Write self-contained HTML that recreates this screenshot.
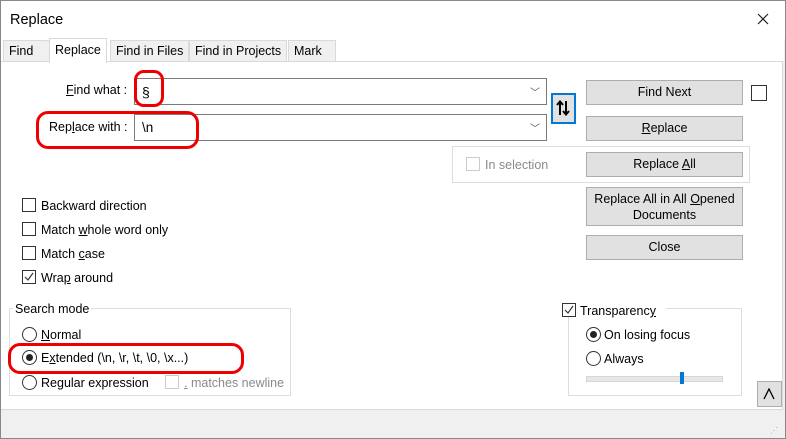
<!DOCTYPE html>
<html><head><style>
body{margin:0;width:786px;height:439px;overflow:hidden;font-family:"Liberation Sans",sans-serif;font-size:12.5px;color:#000;background:#fff;position:relative}
.a{position:absolute;white-space:nowrap}
.win{left:0;top:0;width:784px;height:437px;border:1px solid #888;background:#f0f0f0}
.cb{position:absolute;width:12px;height:12px;border:1px solid #333;background:#fff}
.rb{position:absolute;width:13px;height:13px;border:1px solid #333;border-radius:50%;background:#fff}
.rb.on::after{content:"";position:absolute;left:3px;top:3px;width:7px;height:7px;border-radius:50%;background:#222}
.btn{position:absolute;left:586px;width:155px;background:#e1e1e1;border:1px solid #adadad;text-align:center;line-height:23px}
.tab{position:absolute;top:40px;height:20px;line-height:21px;background:#f0f0f0;border:1px solid #d9d9d9;border-bottom:none;padding:0 5px;font-size:12.5px}
.red{position:absolute;border:3px solid #e00;border-radius:10px}
.inp{position:absolute;left:134px;width:411px;height:25px;border:1px solid #7a7a7a;background:#fff}
.chev{position:absolute;right:6px;top:5px;color:#555;font-size:10px}
u{text-decoration:underline}
</style></head><body>
<div class="a win"></div>
<div class="a" style="left:1px;top:1px;width:784px;height:38px;background:#fff"></div>
<div class="a" style="left:10px;top:12px;font-size:14.5px">Replace</div>
<svg class="a" style="left:757px;top:13px" width="12" height="12"><path d="M1 1L11 11M11 1L1 11" stroke="#222" stroke-width="1.2"/></svg>
<div class="a" style="left:1px;top:39px;width:783px;height:22px;background:#fff"></div>
<div class="a" style="left:1px;top:61px;width:781px;height:347px;background:#fff;border-top:1px solid #d9d9d9;border-right:1px solid #d9d9d9;border-bottom:1px solid #d9d9d9"></div>
<div class="tab" style="left:3px;width:36px">Find</div>
<div class="tab" style="left:49px;top:38px;height:24px;background:#fff;line-height:22px">Replace</div>
<div class="tab" style="left:110px">Find in Files</div>
<div class="tab" style="left:189px">Find in Projects</div>
<div class="tab" style="left:288px;width:36px">Mark</div>

<div class="a" style="left:66px;top:83px"><u>F</u>ind what :</div>
<div class="inp" style="top:78px"><span class="a" style="left:7px;top:5px;font-size:14px">§</span><span class="chev">﹀</span></div>
<div class="a" style="left:49px;top:120px">Rep<u>l</u>ace with :</div>
<div class="inp" style="top:114px"><span class="a" style="left:7px;top:5px;font-size:13.5px">\n</span><span class="chev">﹀</span></div>
<div class="a" style="left:551px;top:93px;width:21px;height:27px;border:2px solid #0078d7;background:#e1e1e1"></div>
<svg class="a" style="left:556px;top:100px" width="14" height="16"><path d="M4 15V2M1 5L4 1.5L7 5M10 1V14M7 11L10 14.5L13 11" stroke="#000" stroke-width="2" fill="none"/></svg>
<div class="red" style="left:134px;top:70px;width:24px;height:31px"></div>
<div class="red" style="left:36px;top:111px;width:157px;height:32px;border-radius:12px"></div>

<div class="btn" style="top:80px;height:23px">Find Next</div>
<div class="cb" style="left:751px;top:85px;width:14px;height:14px"></div>
<div class="btn" style="top:116px;height:23px"><u>R</u>eplace</div>
<div class="a" style="left:452px;top:146px;width:296px;height:35px;border:1px solid #ddd"></div>
<div class="cb" style="left:466px;top:157px;border-color:#ccc"></div>
<div class="a" style="left:485px;top:158px;color:#8a8a8a">In selection</div>
<div class="btn" style="top:152px;height:23px">Replace <u>A</u>ll</div>
<div class="btn" style="top:187px;line-height:16px;padding-top:3px;height:34px">Replace All in All <u>O</u>pened<br>Documents</div>
<div class="btn" style="top:235px;height:23px">Close</div>

<div class="cb" style="left:22px;top:198px"></div><div class="a" style="left:41px;top:199px">Backward direction</div>
<div class="cb" style="left:22px;top:222px"></div><div class="a" style="left:41px;top:223px">Match <u>w</u>hole word only</div>
<div class="cb" style="left:22px;top:246px"></div><div class="a" style="left:41px;top:247px">Match <u>c</u>ase</div>
<div class="cb" style="left:22px;top:270px"><svg width="12" height="12" style="position:absolute;left:0;top:0"><path d="M2 6L5 9L10 2" stroke="#333" stroke-width="1.2" fill="none"/></svg></div><div class="a" style="left:41px;top:271px">Wra<u>p</u> around</div>

<div class="a" style="left:9px;top:308px;width:280px;height:86px;border:1px solid #ddd"></div>
<div class="a" style="left:13px;top:302px;background:#fff;padding:0 2px">Search mode</div>
<div class="rb" style="left:22px;top:327px"></div><div class="a" style="left:41px;top:328px"><u>N</u>ormal</div>
<div class="rb on" style="left:22px;top:350px"></div><div class="a" style="left:41px;top:351px">E<u>x</u>tended (\n, \r, \t, \0, \x...)</div>
<div class="rb" style="left:22px;top:375px"></div><div class="a" style="left:41px;top:376px">Re<u>g</u>ular expression</div>
<div class="cb" style="left:165px;top:375px;border-color:#ccc"></div><div class="a" style="left:184px;top:376px;color:#8a8a8a;width:100px;overflow:hidden"><u>.</u> matches newline</div>
<div class="red" style="left:8px;top:343px;width:230px;height:25px;border-radius:12px"></div>

<div class="a" style="left:568px;top:308px;width:172px;height:86px;border:1px solid #ddd"></div>
<div class="a" style="left:560px;top:300px;width:106px;height:16px;background:#fff"></div>
<div class="cb" style="left:562px;top:303px"><svg width="12" height="12" style="position:absolute;left:0;top:0"><path d="M2 6L5 9L10 2" stroke="#333" stroke-width="1.2" fill="none"/></svg></div>
<div class="a" style="left:580px;top:304px">Transparenc<u>y</u></div>
<div class="rb on" style="left:586px;top:327px"></div><div class="a" style="left:604px;top:328px">On losing focus</div>
<div class="rb" style="left:586px;top:351px"></div><div class="a" style="left:604px;top:352px">Always</div>
<div class="a" style="left:586px;top:376px;width:135px;height:4px;background:#e7e7e7;border:1px solid #d6d6d6"></div>
<div class="a" style="left:680px;top:372px;width:4px;height:12px;background:#0078d7"></div>
<div class="a" style="left:757px;top:381px;width:23px;height:24px;background:#e1e1e1;border:1px solid #adadad"></div>
<svg class="a" style="left:763px;top:388px" width="12" height="12"><path d="M1 11L6 1L11 11" stroke="#000" stroke-width="1.3" fill="none"/></svg>
<div class="a" style="left:770px;top:426px;color:#aaa;font-size:8px;letter-spacing:-1px">⋰</div>
</body></html>
